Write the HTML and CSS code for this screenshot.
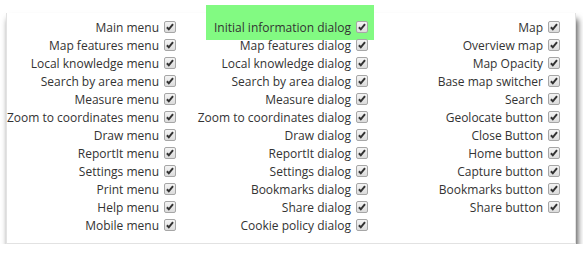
FILE: index.html
```html
<!DOCTYPE html>
<html>
<head>
    <title>Widget options</title>
    <link rel="stylesheet" href="styles.css">
</head>
<body>
    <div class="panel">
        <div class="col">
            <label class="opt">Main menu <input type="checkbox" checked></label>
            <label class="opt">Map features menu <input type="checkbox" checked></label>
            <label class="opt">Local knowledge menu <input type="checkbox" checked></label>
            <label class="opt">Search by area menu <input type="checkbox" checked></label>
            <label class="opt">Measure menu <input type="checkbox" checked></label>
            <label class="opt">Zoom to coordinates menu <input type="checkbox" checked></label>
            <label class="opt">Draw menu <input type="checkbox" checked></label>
            <label class="opt">ReportIt menu <input type="checkbox" checked></label>
            <label class="opt">Settings menu <input type="checkbox" checked></label>
            <label class="opt">Print menu <input type="checkbox" checked></label>
            <label class="opt">Help menu <input type="checkbox" checked></label>
            <label class="opt">Mobile menu <input type="checkbox" checked></label>
        </div>
        <div class="col">
            <label class="opt highlight">Initial information dialog <input type="checkbox" checked></label>
            <label class="opt">Map features dialog <input type="checkbox" checked></label>
            <label class="opt">Local knowledge dialog <input type="checkbox" checked></label>
            <label class="opt">Search by area dialog <input type="checkbox" checked></label>
            <label class="opt">Measure dialog <input type="checkbox" checked></label>
            <label class="opt">Zoom to coordinates dialog <input type="checkbox" checked></label>
            <label class="opt">Draw dialog <input type="checkbox" checked></label>
            <label class="opt">ReportIt dialog <input type="checkbox" checked></label>
            <label class="opt">Settings dialog <input type="checkbox" checked></label>
            <label class="opt">Bookmarks dialog <input type="checkbox" checked></label>
            <label class="opt">Share dialog <input type="checkbox" checked></label>
            <label class="opt">Cookie policy dialog <input type="checkbox" checked></label>
        </div>
        <div class="col">
            <label class="opt">Map <input type="checkbox" checked></label>
            <label class="opt">Overview map <input type="checkbox" checked></label>
            <label class="opt">Map Opacity <input type="checkbox" checked></label>
            <label class="opt">Base map switcher <input type="checkbox" checked></label>
            <label class="opt">Search <input type="checkbox" checked></label>
            <label class="opt">Geolocate button <input type="checkbox" checked></label>
            <label class="opt">Close Button <input type="checkbox" checked></label>
            <label class="opt">Home button <input type="checkbox" checked></label>
            <label class="opt">Capture button <input type="checkbox" checked></label>
            <label class="opt">Bookmarks button <input type="checkbox" checked></label>
            <label class="opt">Share button <input type="checkbox" checked></label>
        </div>
    </div>
</body>
</html>
```

FILE: styles.css
```css
body {
    margin: 0;
    background: #fff;
    font-family: 'Open Sans', 'DejaVu Sans', sans-serif;
    font-size: 12px;
    color: #333;
}
.panel {
    width: 553px;
    margin: 13px 0 0 6px;
    padding: 5px 15px 9px 0;
    border: 1px solid #e2e2e2;
    border-top: none;
    background: #fff;
    display: grid;
    grid-template-columns: 169px 192px 192px;
    box-shadow: 2px 6px 6px rgba(0, 0, 0, 0.65);
}
.col {
    display: flex;
    flex-direction: column;
    align-items: flex-end;
}
.col:nth-child(2) {
    position: relative;
    z-index: 0;
}
.opt {
    height: 18px;
    display: flex;
    align-items: center;
    gap: 5px;
    white-space: nowrap;
    position: relative;
}
.opt input {
    appearance: none;
    -webkit-appearance: none;
    margin: 0;
    width: 12px;
    height: 12px;
    border: 1px solid #a6a6a6;
    border-radius: 2px;
    background: linear-gradient(#f4f4f4, #dcdcdc);
}
.opt input:checked {
    background-image: url("data:image/svg+xml;utf8,<svg xmlns='http://www.w3.org/2000/svg' viewBox='0 0 12 12'><path d='M2.3 6.3 L4.6 8.8 L9.6 2.6' fill='none' stroke='%23333' stroke-width='2.4'/></svg>"), linear-gradient(#f4f4f4, #dcdcdc);
    background-size: 100% 100%;
}
.highlight::before {
    content: "";
    position: absolute;
    top: -13px;
    bottom: -4px;
    right: -6px;
    width: 168px;
    background: #82fa82;
    z-index: -1;
}
```
